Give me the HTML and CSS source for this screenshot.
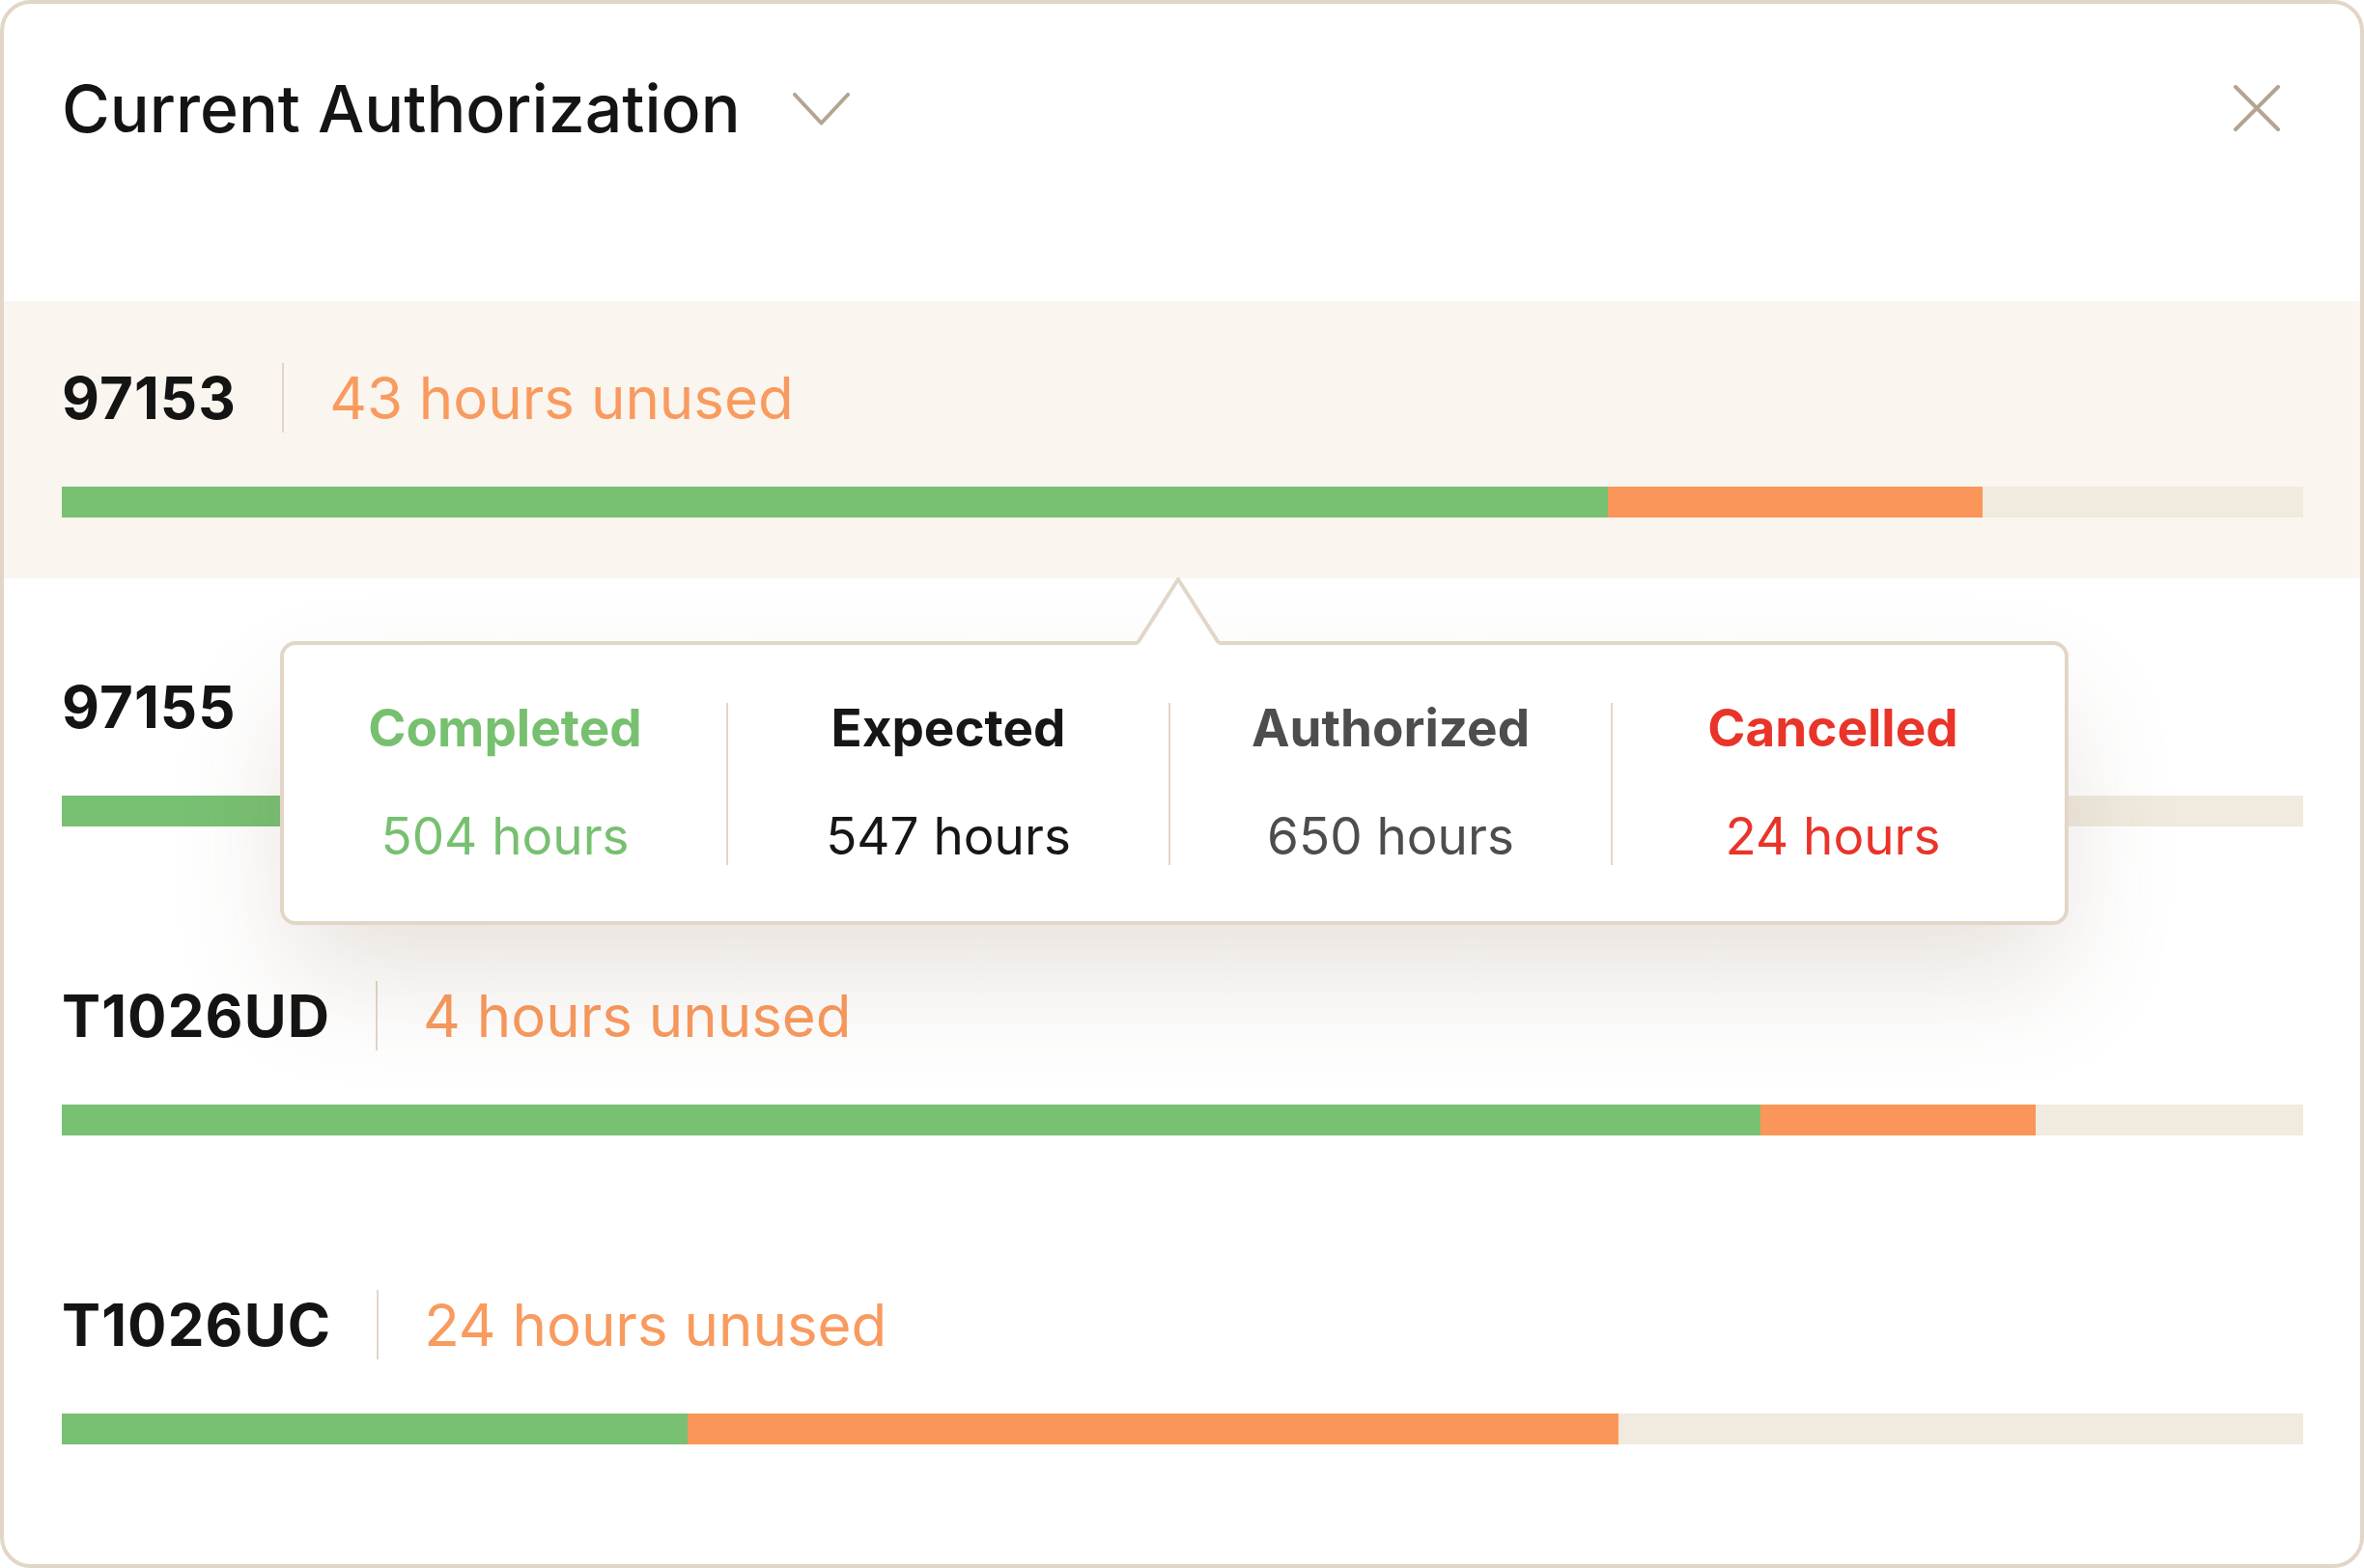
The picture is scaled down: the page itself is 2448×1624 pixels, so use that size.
FILE: index.html
```html
<!DOCTYPE html>
<html lang="en">
<head>
<meta charset="utf-8">
<title>Current Authorization</title>
<link rel="stylesheet" href="styles.css">
</head>
<body>
<div class="card">
  <header class="head">
    <div class="title-group">
      <h1 class="title">Current Authorization</h1>
      <svg class="chev" width="59" height="34" viewBox="0 0 59 34" aria-hidden="true"><path d="M2 2 L29.5 31.5 L57 2" fill="none" stroke="#b3a592" stroke-width="4" stroke-linecap="round" stroke-linejoin="round"/></svg>
    </div>
    <button class="close" aria-label="Close">
      <svg width="48" height="48" viewBox="0 0 48 48" aria-hidden="true"><path d="M2 2 L46 46 M46 2 L2 46" fill="none" stroke="#b3a592" stroke-width="4" stroke-linecap="round"/></svg>
    </button>
  </header>

  <div class="rows">
    <div class="row active">
      <div class="row-head"><span class="code">97153</span><span class="sep"></span><span class="unused">43 hours unused</span></div>
      <div class="bar"><span class="seg done" style="width:68.98%"></span><span class="seg exp" style="width:16.72%"></span></div>
    </div>
    <div class="row">
      <div class="row-head"><span class="code">97155</span><span class="sep"></span></div>
      <div class="bar"><span class="seg done" style="width:60%"></span><span class="seg exp" style="width:25%"></span></div>
    </div>
    <div class="row">
      <div class="row-head"><span class="code">T1026UD</span><span class="sep"></span><span class="unused">4 hours unused</span></div>
      <div class="bar"><span class="seg done" style="width:75.79%"></span><span class="seg exp" style="width:12.28%"></span></div>
    </div>
    <div class="row">
      <div class="row-head"><span class="code">T1026UC</span><span class="sep"></span><span class="unused">24 hours unused</span></div>
      <div class="bar"><span class="seg done" style="width:27.92%"></span><span class="seg exp" style="width:41.53%"></span></div>
    </div>
  </div>

  <div class="tip">
    <svg class="tip-arrow" width="84" height="73" viewBox="0 0 84 73" aria-hidden="true">
      <polygon points="0,73 0,69 42,3 84,69 84,73" fill="#ffffff"/>
      <polyline points="0,69 42,3 84,69" fill="none" stroke="#e2d6c8" stroke-width="4" stroke-linejoin="round"/>
    </svg>
    <div class="stat">
      <div class="stat-label completed">Completed</div>
      <div class="stat-value completed">504 hours</div>
    </div>
    <div class="stat">
      <div class="stat-label expected">Expected</div>
      <div class="stat-value expected">547 hours</div>
    </div>
    <div class="stat">
      <div class="stat-label authorized">Authorized</div>
      <div class="stat-value authorized">650 hours</div>
    </div>
    <div class="stat">
      <div class="stat-label cancelled">Cancelled</div>
      <div class="stat-value cancelled">24 hours</div>
    </div>
  </div>
</div>
</body>
</html>
```

FILE: styles.css
```css
html, body {
  margin: 0;
  padding: 0;
  background: #ffffff;
}

body {
  font-family: Inter, "Liberation Sans", sans-serif;
  color: #141414;
}

.card {
  position: relative;
  width: 2448px;
  height: 1624px;
  box-sizing: border-box;
  border: 4px solid #e2d6c8;
  border-radius: 32px;
  background: #ffffff;
  overflow: hidden;
}

.head {
  height: 308px;
  box-sizing: border-box;
  padding: 68px 83px 0 60px;
  display: flex;
  justify-content: space-between;
  align-items: flex-start;
}

.title-group {
  display: flex;
  align-items: center;
  gap: 54px;
  height: 80px;
}

.title {
  margin: 0;
  font-size: 68px;
  line-height: 80px;
  font-weight: 500;
  color: #141414;
}

.chev {
  display: block;
  margin-top: 2px;
}

.close {
  display: flex;
  align-items: center;
  justify-content: center;
  width: 48px;
  height: 80px;
  padding: 0;
  border: 0;
  background: transparent;
}

.close svg {
  display: block;
}

.rows {
  display: flex;
  flex-direction: column;
  gap: 33px;
}

.row {
  padding: 64px 59px 63px 60px;
}

.row.active {
  background: #faf5ef;
}

.row-head {
  display: flex;
  align-items: center;
  gap: 47px;
  height: 72px;
}

.code {
  font-size: 60px;
  line-height: 72px;
  font-weight: 700;
  letter-spacing: 1.1px;
  color: #141414;
}

.sep {
  width: 2px;
  height: 72px;
  background: #e2d6c8;
}

.unused {
  font-size: 60px;
  line-height: 72px;
  font-weight: 400;
  color: #f99a5e;
}

.bar {
  display: flex;
  height: 32px;
  margin-top: 56px;
  background: #f0eadf;
}

.seg {
  display: block;
  height: 100%;
}

.seg.done {
  background: #78c173;
}

.seg.exp {
  background: #fa965a;
}

.tip {
  position: absolute;
  left: 286px;
  top: 660px;
  width: 1852px;
  box-sizing: border-box;
  border: 4px solid #e2d6c8;
  border-radius: 16px;
  background: #ffffff;
  padding: 60px 12px 58px 0;
  display: grid;
  grid-template-columns: repeat(4, 1fr);
  box-shadow: 0 60px 120px -10px rgba(110, 80, 50, 0.17);
}

.tip-arrow {
  position: absolute;
  left: 884px;
  top: -71px;
  overflow: visible;
}

.stat {
  display: flex;
  flex-direction: column;
  align-items: center;
  height: 168px;
  box-sizing: border-box;
}

.stat + .stat {
  border-left: 2px solid #e2d6c8;
}

.stat-label {
  font-size: 53px;
  line-height: 52px;
  font-weight: 700;
}

.stat-value {
  font-size: 53px;
  line-height: 52px;
  font-weight: 400;
  margin-top: 60px;
}

.completed { color: #77c070; }
.expected { color: #161616; }
.authorized { color: #4d4d4d; }
.cancelled { color: #e9342a; }
```
